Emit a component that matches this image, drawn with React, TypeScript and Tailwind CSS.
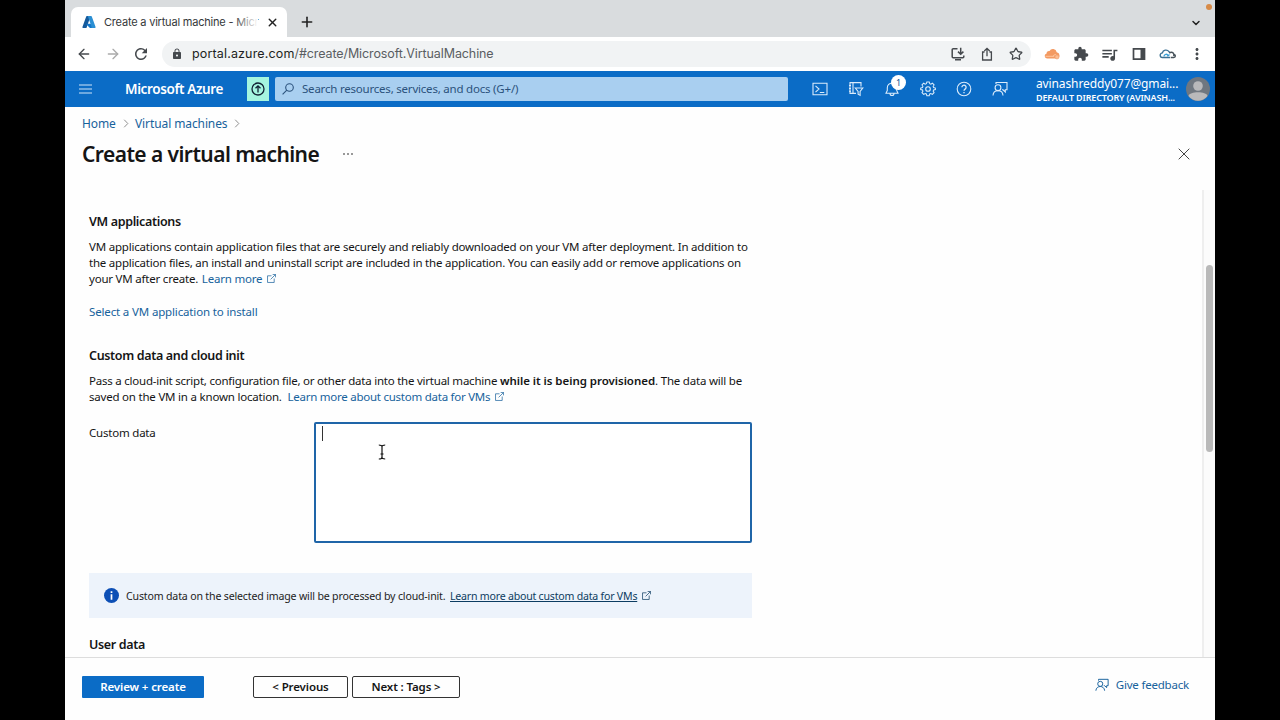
import type {ReactNode} from 'react';
import {ArrowLeft, ArrowRight, ChevronDown, Plus, Star, X} from 'lucide-react';
import {MdExtension, MdLock, MdMoreVert, MdQueueMusic, MdRefresh} from 'react-icons/md';

const stroke = {fill: 'none', stroke: 'currentColor', strokeWidth: 1.1} as const;

const AzureLogo = () => (
    <svg viewBox="0 0 16 16" className="h-[14px] w-[14px]">
        <path d="M5.6 1h4.2L5.3 14.2a.8.8 0 0 1-.8.6H1.3a.8.8 0 0 1-.8-1L4.8 1.6A.9.9 0 0 1 5.6 1Z" fill="#155a9c"/>
        <path d="M11.4 10H5.2l-.4.7 4.3 4.1h4Z" fill="#1276c9"/>
        <path d="M6 1h4.4a.9.9 0 0 1 .8.6l4.3 12.2a.8.8 0 0 1-.8 1h-4.5a.8.8 0 0 0 .8-1L6.8 1.6A.9.9 0 0 0 6 1Z" fill="#2b8fd3"/>
    </svg>
);

const InstallIcon = () => (
    <svg viewBox="0 0 14 14" className="h-[14px] w-[14px]" fill="none" stroke="currentColor" strokeWidth="1.5">
        <path d="M6.5 1.7H2.2a1 1 0 0 0-1 1v7a1 1 0 0 0 1 1h9.6a1 1 0 0 0 1-1V8.5M4 12.7h6M9.7.8v6M7 4.6l2.7 2.7 2.7-2.7"/>
    </svg>
);

const ShareIcon = () => (
    <svg viewBox="0 0 14 14" className="h-[14px] w-[14px]" fill="none" stroke="currentColor" strokeWidth="1.3">
        <path d="M4.5 5H2.6v8h8.8V5H9.5M7 9.2V1.5M4.3 4 7 1.3 9.7 4"/>
    </svg>
);

const SidePanelIcon = () => (
    <svg viewBox="0 0 14 14" className="h-[14px] w-[14px]">
        <path d="M1.5 1.8h11v10.4h-11Z" fill="none" stroke="currentColor" strokeWidth="1.7"/>
        <path d="M8.5 1.8h4v10.4h-4Z" fill="currentColor"/>
    </svg>
);

const OrangeCloud = () => (
    <svg viewBox="0 0 16 12" className="h-[12px] w-[16px]">
        <path d="M3 10.5a2.6 2.6 0 0 1-.4-5.1A2.3 2.3 0 0 1 5.500 3a3.9 3.9 0 0 1 7.2 1.2 3.2 3.2 0 0 1 .3 6.3Z" fill="#f39a62"/>
        <path d="M1.5 8.3h8.7M9 8.3c1-2 3-2 3.5-1" fill="none" stroke="#ffd0ac" strokeWidth=".8"/>
        <circle cx="13" cy="9" r="2" fill="#fbbd92" stroke="#f0a06f" strokeWidth=".6"/>
    </svg>
);

const OutlineCloud = () => (
    <svg viewBox="0 0 18 12" className="h-[12px] w-[18px]" fill="none" strokeWidth="1.4">
        <path d="M11 9.5H3.6a2.3 2.3 0 0 1-.2-4.6C4 2 8 1 10 3.6c.6.8.9 1.5.9 1.5" stroke="#3c7193"/>
        <path d="M10.5 4.800c2-1.200 4.200-.2 4.400 1.600 2 .3 2 3.100-.2 3.100h-3" stroke="#48535b"/>
        <path d="M5 8.500c0-2.500 3.300-3 4-.7l1.500-1.300" stroke="#3ba1d8"/>
        <circle cx="15" cy="7.3" r="1" fill="#48535b"/>
    </svg>
);

const CloudShellIcon = () => (
    <svg viewBox="0 0 16 16" className="h-4 w-4" {...stroke}>
        <path d="M1 2.2h14v11.6H1ZM3.5 4.8 7 8l-3.5 3.2M7.8 11.5h4.5"/>
    </svg>
);

const DirectoryIcon = () => (
    <svg viewBox="0 0 16 16" className="h-4 w-4" {...stroke}>
        <path d="M13 5.5V1.6H2v10.8h6M5 1.6v10.8M1 4.5h2M1 7.5h2M1 10.3h2M7.3 7h7.5l-2.7 3.4v4l-2-1.2v-2.8Z"/>
    </svg>
);

const BellIcon = () => (
    <svg viewBox="0 0 16 16" className="h-4 w-4" {...stroke}>
        <path d="M2 12.3h12L12.7 9.5V6.8a4.7 4.7 0 0 0-9.4 0v2.7ZM6 12.5a2 2 0 0 0 4 0"/>
    </svg>
);

const GearIcon = () => (
    <svg viewBox="0 0 16 16" className="h-4 w-4" {...stroke}>
        <path d="m6.7 1.1 2.6 0 .5 1.9 1.2.5 1.7-1 1.8 1.8-1 1.7.5 1.2 1.9.5v1.6l-1.9.5-.5 1.2 1 1.7-1.8 1.8-1.7-1-1.2.5-.5 1.9H6.7L6.2 14 5 13.5l-1.7 1-1.8-1.8 1-1.7L2 9.8.1 9.3V7.7L2 7.2 2.5 6l-1-1.7 1.8-1.8 1.7 1L6.2 3Z" transform="translate(.6 -.1) scale(.93)"/>
        <circle cx="8" cy="8" r="2.3"/>
    </svg>
);

const HelpIcon = () => (
    <svg viewBox="0 0 16 16" className="h-4 w-4" {...stroke}>
        <circle cx="8" cy="8" r="6.8"/>
        <path d="M5.9 6.2a2.1 2.1 0 1 1 3.4 1.7C8.3 8.6 8 9 8 9.8M8 11v1.2" strokeWidth="1.3"/>
    </svg>
);

const FeedbackIcon = ({className}: { className: string }) => (
    <svg viewBox="0 0 16 16" className={className} {...stroke}>
        <path d="M4 3V1.5h11v7.3h-1.7V11L11 8.8h-1"/>
        <circle cx="6" cy="6.7" r="2.9"/>
        <path d="M1 14.5c.3-6.4 9.7-6.4 10 0"/>
    </svg>
);

const ExternalIcon = () => (
    <svg viewBox="0 0 10 10" className="ml-[5px] inline h-[9px] w-[9px] align-[0px]" fill="none" stroke="currentColor" strokeWidth=".8">
        <path d="M5 2H.6v7.4H8V5M6.3.5h3.2v3.2M9.4.6 4 6"/>
    </svg>
);

const Crumb = ({className}: { className: string }) => (
    <svg viewBox="0 0 6 10" className={className} fill="none" stroke="#777" strokeWidth=".9">
        <path d="m1 .8 4 4.200-4 4.200"/>
    </svg>
);

const TabBar = () => (
    <div className="flex h-[37px] items-end bg-[#d9dcde] font-['Inter']">
        <div className="ml-[6px] flex h-[30px] w-[216px] items-center rounded-t-[7px] bg-white pl-[11px]">
            <AzureLogo/>
            <div className="relative ml-[8px] w-[154px] whitespace-nowrap text-[11px] leading-4 tracking-[-0.2px] text-[#34373a]">
                Create a virtual machine - Micr
                <span className="absolute right-0 top-0 h-4 w-6 bg-gradient-to-r from-transparent to-white"/>
            </div>
            <X className="ml-[8px] h-[13px] w-[13px] text-[#222]" strokeWidth={2.6}/>
        </div>
        <Plus className="mb-[7px] ml-[12px] h-4 w-4 text-[#222]" strokeWidth={2.4}/>
        <ChevronDown className="mb-[8px] ml-auto h-[12px] w-[12px] text-[#222]" strokeWidth={3}/>
        <span className="mb-[27px] ml-[4px] mr-[3px] h-[6px] w-[6px] rounded-full bg-[#d78b48]"/>
    </div>
);

const Toolbar = () => (
    <div className="flex h-[34px] items-center bg-white text-[#45494d]">
        <ArrowLeft className="ml-[11px] h-[16px] w-[16px]" strokeWidth={2}/>
        <ArrowRight className="ml-[13px] h-[16px] w-[16px] text-[#aaa]" strokeWidth={2}/>
        <MdRefresh className="ml-[11px] h-[18px] w-[18px]"/>
        <div className="ml-[12px] flex h-[26px] w-[869px] items-center rounded-full bg-[#f1f3f4] pl-[9px] pr-[8px]">
            <MdLock className="h-[12px] w-[12px]"/>
            <span className="ml-[9px] whitespace-nowrap pt-px font-['Inter'] text-[12.5px] tracking-[-0.1px] text-[#5a5e62]">
                <span className="tracking-[0.15px] text-[#1d1f21]">portal.azure.com</span>/#create/Microsoft.VirtualMachine
            </span>
            <div className="ml-auto flex items-center gap-[15px]">
                <InstallIcon/>
                <ShareIcon/>
                <Star className="h-[14px] w-[14px]" strokeWidth={2.2}/>
            </div>
        </div>
        <div className="ml-[6px] grid grid-cols-[repeat(6,29px)] place-items-center">
            <OrangeCloud/>
            <MdExtension className="h-[16px] w-[16px]"/>
            <MdQueueMusic className="h-[19px] w-[19px]"/>
            <SidePanelIcon/>
            <OutlineCloud/>
            <MdMoreVert className="h-[18px] w-[18px]"/>
        </div>
    </div>
);

const AzureBar = () => (
    <header className="flex h-[36px] items-center bg-[#0b6cc6] text-white">
        <svg viewBox="0 0 13 10" className="ml-[14px] h-[10px] w-[13px]" stroke="#cfe4f8" strokeWidth="1">
            <path d="M0 1h13M0 5h13M0 9h13"/>
        </svg>
        <span className="ml-[33px] w-[99px] whitespace-nowrap pt-px text-[13.5px] font-semibold tracking-[-0.38px]">Microsoft Azure</span>
        <span className="ml-[23px] flex h-[24px] w-[22px] items-center justify-center bg-[#a5f5df] text-[#123]">
            <svg viewBox="0 0 14 14" className="h-[14px] w-[14px]" fill="none" stroke="currentColor" strokeWidth="1.3">
                <circle cx="7" cy="7" r="6"/>
                <path d="M7 10.5V4M4.5 6.3 7 3.8l2.5 2.5"/>
            </svg>
        </span>
        <div className="ml-[6px] flex h-[24px] w-[513px] items-center rounded-[2px] bg-[#a9cff0] pl-[7px] text-[#2b527c]">
            <svg viewBox="0 0 12 12" className="h-[12px] w-[12px]" {...stroke}>
                <circle cx="7.5" cy="4.5" r="3.8"/>
                <path d="M4.8 7.2.6 11.4"/>
            </svg>
            <span className="ml-[8px] whitespace-nowrap text-[11.5px] tracking-[-0.21px]">Search resources, services, and docs (G+/)</span>
        </div>
        <div className="ml-[24px] flex gap-[20px] text-[#dcecfb]">
            <CloudShellIcon/>
            <DirectoryIcon/>
            <div className="relative">
                <BellIcon/>
                <span className="absolute -top-[6px] left-[7px] flex h-[15px] w-[15px] items-center justify-center rounded-full bg-white text-[9px] text-[#0b4f96]">1</span>
            </div>
            <GearIcon/>
            <HelpIcon/>
            <FeedbackIcon className="h-4 w-4"/>
        </div>
        <div className="ml-[28px] w-[144px] whitespace-nowrap pt-[2px]">
            <div className="text-[12px] leading-[14px] tracking-[-0.12px]">avinashreddy077@gmai...</div>
            <div className="text-[9px] font-semibold leading-[13px] tracking-[-0.15px]">DEFAULT DIRECTORY (AVINASH...</div>
        </div>
        <svg viewBox="0 0 24 24" className="ml-[6px] h-6 w-6">
            <circle cx="12" cy="12" r="12" fill="#6f7780"/>
            <circle cx="12" cy="9" r="4.8" fill="#b9b9bb"/>
            <path d="M2.5 19c1-5 18-5 19 0a12 12 0 0 1-19 0Z" fill="#b9b9bb"/>
        </svg>
    </header>
);

const PageHeader = () => (
    <div className="h-[83px] pl-[17px] pr-[25px]">
        <div className="flex h-[32px] items-center pt-px text-[12px] tracking-[-0.1px] text-[#17629c]">
            <span className="w-[34px]">Home</span>
            <Crumb className="ml-[7px] mr-[6px] h-[9px] w-[6px]"/>
            <span className="w-[93px] whitespace-nowrap">Virtual machines</span>
            <Crumb className="mx-[6px] h-[9px] w-[6px]"/>
        </div>
        <div className="flex h-[30px] items-center">
            <h1 className="w-[238px] whitespace-nowrap pb-px text-[21px] font-semibold leading-7 tracking-[-0.57px]">Create a virtual machine</h1>
            <span className="ml-[23px] flex gap-[2px]">
                {[0, 1, 2].map(i => <i key={i} className="h-[2px] w-[2px] rounded-full bg-[#777]"/>)}
            </span>
            <svg viewBox="0 0 12 12" className="ml-auto h-[12px] w-[12px]" fill="none" stroke="#444" strokeWidth="1">
                <path d="m.7.7 10.6 10.6M11.3.7.7 11.3"/>
            </svg>
        </div>
    </div>
);

const SectionTitle = ({children}: { children: ReactNode }) => (
    <h2 className="whitespace-nowrap text-[12.5px] font-semibold leading-4 tracking-[-0.34px]">{children}</h2>
);

const Content = () => (
    <main className="flex h-[467px] overflow-hidden">
        <div className="w-[1137px] whitespace-nowrap pl-[24px] pt-[24px] text-[11.5px] leading-4 tracking-[-0.21px]">
            <SectionTitle>VM applications</SectionTitle>
            <p className="mt-[9px]">
                VM applications contain application files that are securely and reliably downloaded on your VM after deployment. In addition to<br/>
                <span className="tracking-[-0.22px]">the application files, an install and uninstall script are included in the application. You can easily add or remove applications on</span><br/>
                your VM after create. <a className="ml-px text-[#17629c]">Learn more<ExternalIcon/></a>
            </p>
            <p className="mt-[17px] tracking-[-0.15px] text-[#17629c]">Select a VM application to install</p>
            <div className="mt-[28px]">
                <SectionTitle>Custom data and cloud init</SectionTitle>
            </div>
            <p className="mt-[9px]">
                <span className="tracking-[-0.23px]">Pass a cloud-init script, configuration file, or other data into the virtual machine </span>
                <b className="font-semibold tracking-[-0.04px]">while it is being provisioned</b>. The data will be<br/>
                saved on the VM in a known location. <a className="ml-[3px] tracking-[-0.25px] text-[#17629c]">Learn more about custom data for VMs<ExternalIcon/></a>
            </p>
            <div className="mt-[17px] flex">
                <span className="w-[225px] pt-[3px]">Custom data</span>
                <div className="relative h-[121px] w-[438px] rounded-[2px] border-2 border-[#1f65a8] bg-white">
                    <span className="absolute left-[6px] top-[2px] h-[15px] w-px bg-[#333]"/>
                    <svg viewBox="0 0 8 16" className="absolute left-[62px] top-[20px] h-4 w-2" fill="none" stroke="#111" strokeWidth="1.2">
                        <path d="M.8 1C3 1 4 1.5 4 2.8v10.4C4 14.5 3 15 .8 15M7.2 1C5 1 4 1.5 4 2.8M7.2 15C5 15 4 14.5 4 13.2M2.5 10h3"/>
                    </svg>
                </div>
            </div>
            <div className="mt-[30px] flex h-[45px] w-[663px] items-center bg-[#edf3fb] pl-[15px]">
                <svg viewBox="0 0 14 14" className="h-[15px] w-[15px]">
                    <circle cx="7" cy="7" r="7" fill="#0d4fb5"/>
                    <path d="M7 3v1.700M7 5.800V11" stroke="#fff" strokeWidth="1.6"/>
                </svg>
                <span className="ml-[7px] pt-px text-[10.6px] tracking-[-0.17px] text-[#222]">
                    Custom data on the selected image will be processed by cloud-init. <a className="ml-[2px] tracking-[-0.22px] text-[#0c3c61]"><span className="underline">Learn more about custom data for VMs</span><ExternalIcon/></a>
                </span>
            </div>
            <div className="mt-[19px]">
                <SectionTitle>User data</SectionTitle>
            </div>
        </div>
        <div className="flex w-[13px] justify-center border-l-2 border-[#eee] bg-[#fbfbfb]">
            <span className="mt-[75px] h-[187px] w-[7px] rounded-full bg-[#b9b9b9]"/>
        </div>
    </main>
);

const Footer = () => (
    <footer className="flex h-[63px] items-start whitespace-nowrap border-t border-[#ddd] pl-[17px] pt-[18px] text-[11.5px] font-semibold tracking-[-0.12px]">
        <button className="h-[22px] w-[122px] rounded-[1px] bg-[#0b6cc6] pb-px text-white">Review + create</button>
        <button className="ml-[49px] h-[22px] w-[95px] rounded-[2px] border border-[#333] pb-px">&lt; Previous</button>
        <button className="ml-[4px] h-[22px] w-[108px] rounded-[2px] border border-[#333] pb-px">Next : Tags &gt;</button>
        <a className="ml-auto mr-[26px] flex items-center font-normal tracking-[-0.2px] text-[#17629c]">
            <FeedbackIcon className="mr-[7px] h-[14px] w-[14px]"/>Give feedback
        </a>
    </footer>
);

export default function App() {
    return (
        <div className="h-[720px] w-[1280px] overflow-hidden bg-black px-[65px] font-['Noto_Sans','Open_Sans',sans-serif] text-[#151515]">
            <div className="h-full bg-[#fefefe]">
                <TabBar/>
                <Toolbar/>
                <AzureBar/>
                <PageHeader/>
                <Content/>
                <Footer/>
            </div>
        </div>
    );
}
